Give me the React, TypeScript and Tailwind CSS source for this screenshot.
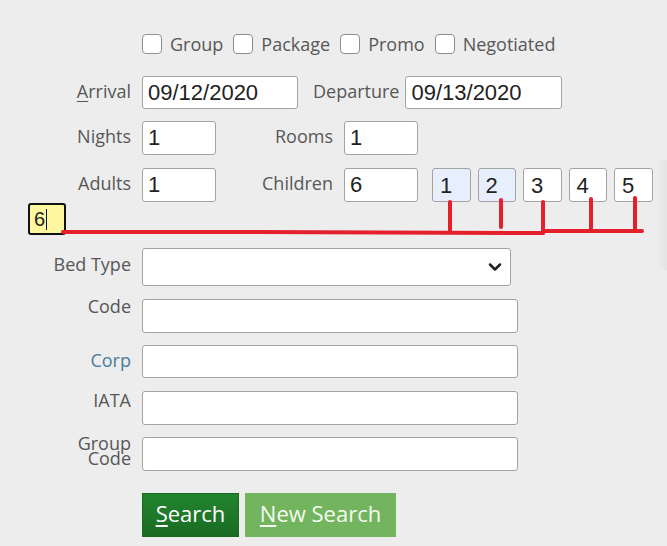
import { ChevronDown } from "lucide-react";

const labelBase = "font-['Open_Sans',sans-serif] text-[18px]";
const labelFont = `${labelBase} text-[#575757]`;
const inputCls =
  "h-full rounded-[3px] border border-[#a3a3a3] bg-white px-[5px] font-['Liberation_Sans',Arial,sans-serif] text-[22px] leading-none text-[#222] flex items-center";

function Check({ label }: { label: string }) {
  return (
    <div className="flex h-[20px] items-center">
      <span className="h-[20px] w-[20px] rounded-[4px] border border-[#8e8e8e] bg-white" />
      <span className={`ml-[8px] mr-[10px] leading-[18px] ${labelFont}`}>{label}</span>
    </div>
  );
}

function Field({ value, className }: { value: string; className: string }) {
  return <div className={`${inputCls} ${className}`}>{value}</div>;
}

function ChildBox({ n, filled }: { n: number; filled?: boolean }) {
  return (
    <div
      className={`flex h-[34px] w-[38.5px] items-center rounded-[3px] border border-[#a3a3a3] pl-[7px] font-['Liberation_Sans',Arial,sans-serif] text-[22px] text-[#222] ${
        filled ? "bg-[#e8effc]" : "bg-white"
      }`}
    >
      {n}
    </div>
  );
}

function Row({ label, children, top, labelClass = "" }: { label: React.ReactNode; children: React.ReactNode; top: string; labelClass?: string }) {
  return (
    <div className={`flex items-start ${top}`}>
      <div className={`w-[131px] text-right ${labelFont} ${labelClass}`}>{label}</div>
      <div className="ml-[11px]">{children}</div>
    </div>
  );
}

export default function App() {
  return (
    <div className="relative h-[546px] w-[667px] overflow-hidden bg-[#ededed]">
      {/* options */}
      <div className="flex pl-[142px] pt-[34px]">
        <Check label="Group" />
        <Check label="Package" />
        <Check label="Promo" />
        <Check label="Negotiated" />
      </div>

      {/* dates */}
      <div className="mt-[22px] flex h-[33px] items-center">
        <div className={`w-[131px] pb-[3px] text-right ${labelFont}`}>
          <span className="underline underline-offset-[3px]">A</span>rrival
        </div>
        <Field value="09/12/2020" className="ml-[11px] w-[156px]" />
        <div className={`ml-[15px] pb-[3px] ${labelFont}`}>Departure</div>
        <Field value="09/13/2020" className="ml-[6px] w-[157px]" />
      </div>

      <div className="mt-[12px] flex h-[34px] items-center">
        <div className={`w-[131px] pb-[4px] text-right ${labelFont}`}>Nights</div>
        <Field value="1" className="ml-[11px] w-[74px]" />
        <div className={`w-[117px] pb-[4px] text-right ${labelFont}`}>Rooms</div>
        <Field value="1" className="ml-[11px] w-[74px]" />
      </div>

      <div className="mt-[13px] flex h-[34px] items-center">
        <div className={`w-[131px] pb-[3px] text-right ${labelFont}`}>Adults</div>
        <Field value="1" className="ml-[11px] w-[74px]" />
        <div className={`w-[117px] pb-[3px] text-right ${labelFont}`}>Children</div>
        <Field value="6" className="ml-[11px] w-[74px]" />
        <div className="ml-[14px] flex gap-[7px]">
          <ChildBox n={1} filled />
          <ChildBox n={2} filled />
          <ChildBox n={3} />
          <ChildBox n={4} />
          <ChildBox n={5} />
        </div>
      </div>

      {/* details */}
      <div className="mt-[46px] flex h-[38px] items-center">
        <div className={`w-[131px] pb-[6px] text-right ${labelFont}`}>Bed Type</div>
        <div className="ml-[11px] flex h-full w-[369px] items-center justify-end rounded-[3px] border border-[#a3a3a3] bg-white pr-[5px]">
          <ChevronDown size={20} strokeWidth={3} className="text-[#222]" />
        </div>
      </div>

      <Row label="Code" top="mt-[13px]" labelClass="-mt-[6px]">
        <div className="h-[34px] w-[376px] rounded-[3px] border border-[#a3a3a3] bg-white" />
      </Row>

      <div className="mt-[12px] flex h-[33px] items-center">
        <div className={`w-[131px] pb-[3px] text-right ${labelBase} text-[#4a7ca0]`}>Corp</div>
        <div className="ml-[11px] h-full w-[376px] rounded-[3px] border border-[#a3a3a3] bg-white" />
      </div>

      <Row label="IATA" top="mt-[13px]" labelClass="-mt-[4px]">
        <div className="h-[34px] w-[376px] rounded-[3px] border border-[#a3a3a3] bg-white" />
      </Row>

      <Row label={<>Group<br />Code</>} top="mt-[12px]" labelClass="leading-[15px] -mt-[1px]">
        <div className="h-[34px] w-[376px] rounded-[3px] border border-[#a3a3a3] bg-white" />
      </Row>

      {/* actions */}
      <div className="ml-[142px] mt-[22px] flex gap-[6px] font-['Open_Sans',sans-serif] text-[22px] text-white">
        <button type="button" className="h-[44px] w-[97px] border border-[#176a20] bg-gradient-to-b from-[#23852f] to-[#196b22] pb-[3px]">
          <span className="underline underline-offset-[3px]">S</span>earch
        </button>
        <button type="button" className="h-[44px] w-[151px] bg-[#72b55e] pb-[3px] text-[#f6fbf2]">
          <span className="underline underline-offset-[3px]">N</span>ew Search
        </button>
      </div>

      {/* focused overflow box */}
      <div className="absolute left-[28px] top-[203px] flex h-[32px] w-[38px] items-center rounded-[3px] border-2 border-[#111] bg-[#fff7a0] pl-[4px] font-['Liberation_Sans',Arial,sans-serif] text-[20px] text-[#222]">
        6<span className="ml-[1px] h-[21px] w-px bg-[#111]" />
      </div>

      {/* annotation */}
      <svg className="pointer-events-none absolute left-0 top-0" width="667" height="546" viewBox="0 0 667 546">
        <g stroke="#e3202b" strokeWidth="4" strokeLinecap="round" fill="none">
          <path d="M63 232 L256 232 L543 233" />
          <path d="M543 231 L642 231" />
          <path d="M450 202 L450 232" />
          <path d="M501 200 L501 227" />
          <path d="M543 202 L543 233" />
          <path d="M591 199 L591 231" />
          <path d="M635 198 L635 231" />
        </g>
      </svg>

      <div className="absolute right-0 top-[160px] h-[110px] w-[10px] bg-gradient-to-l from-[#0000000a] to-transparent" />
    </div>
  );
}
